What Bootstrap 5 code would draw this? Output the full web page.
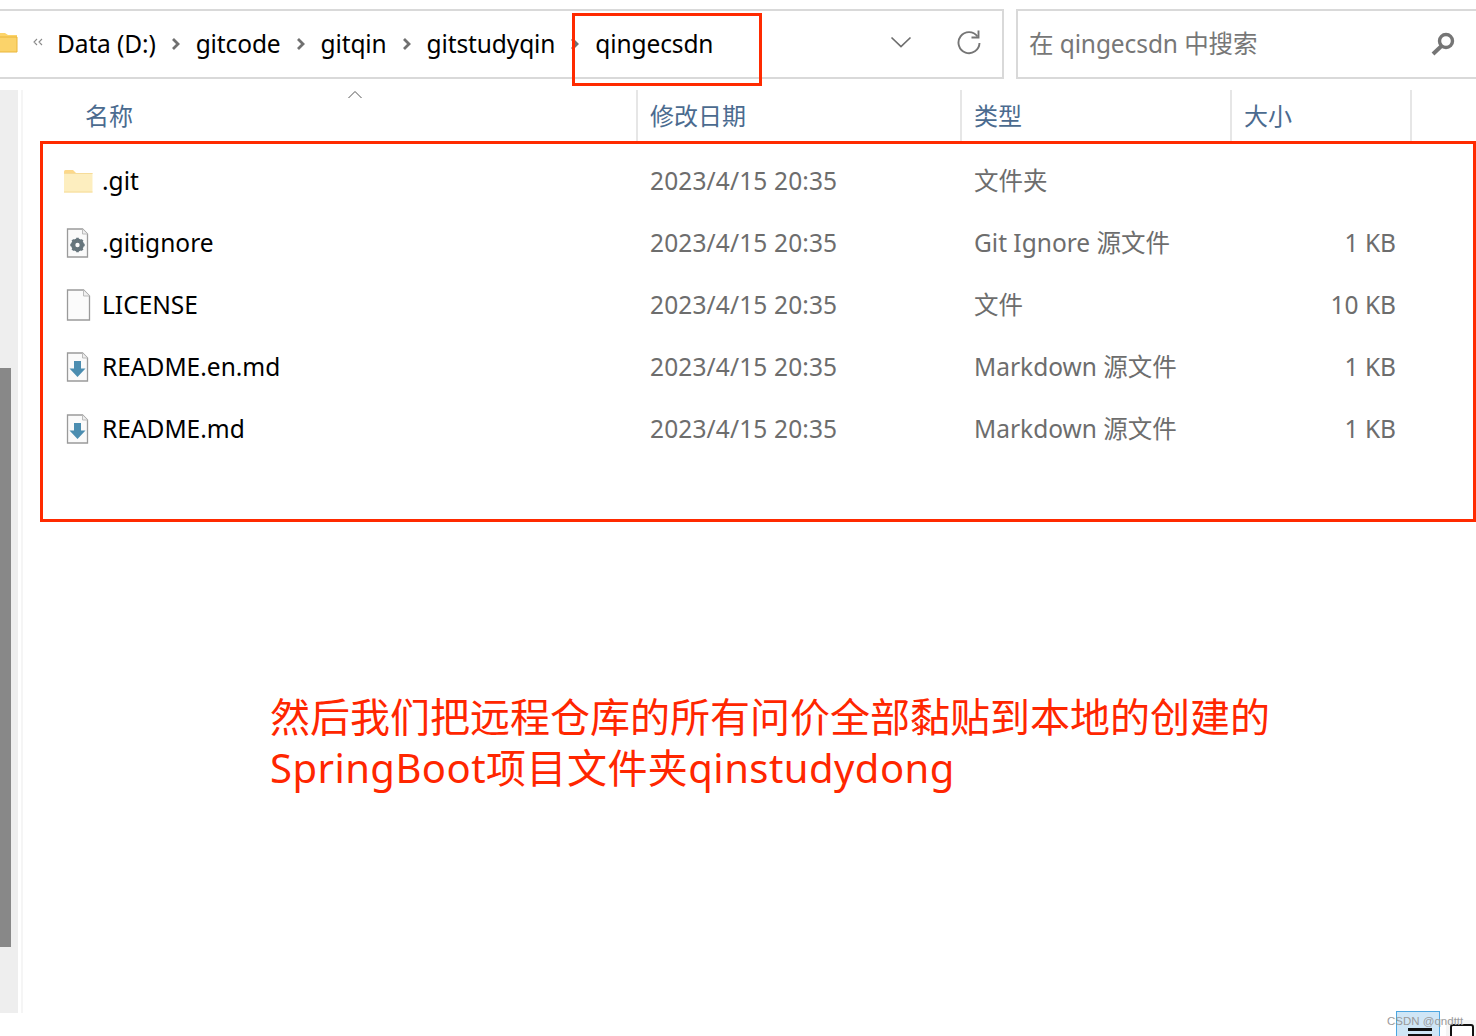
<!DOCTYPE html>
<html lang="zh-CN">
<head>
<meta charset="utf-8">
<title>qingecsdn</title>
<link rel="stylesheet" href="https://cdn.jsdelivr.net/npm/bootstrap@5.3.0/dist/css/bootstrap.min.css">
<style>
html,body{width:1476px;height:1036px;overflow:hidden;background:#fff}
body{position:relative;font-family:"Noto Sans","Noto Sans CJK SC",sans-serif;font-size:24.5px;color:#000;padding-top:9px}
.topbar{height:70px;gap:12px}
.addr{width:1004px;height:70px;border:solid #d9d9d9;border-width:2px 2px 2px 0;flex:none}
.srch{flex:1;height:70px;border:solid #d9d9d9;border-width:2px 0 2px 2px;padding-left:11px;padding-right:20px;color:#777;letter-spacing:-.1px}
.crumb{white-space:nowrap;line-height:1;margin-top:0;letter-spacing:-.12px}
.gap-chev{flex:none}
.explorer{margin-top:11px;height:923px}
.rail{width:24px;flex:none;background:linear-gradient(90deg,#eee 0,#eee 18px,#fff 18px,#fff 21px,#f5f5f5 21px,#f5f5f5 23px,#fff 23px)}
.thumb{width:11px;height:579px;background:#888;margin-top:278px}
.main-col{flex:1;min-width:0}
.cols{display:grid;grid-template-columns:614px 324px 270px 180px 64px}
.head{height:51px;color:#4b6b8f;font-size:24px}
.head>div{border-right:2px solid #e6e6e6;padding-left:12px;line-height:52px;position:relative}
.head>div:last-child{border-right:0}
.head>div:first-child{padding-left:61px}
.caret{position:absolute;left:323px;top:0}
.rows{padding-top:9px}
.frow{height:62px;color:#6d6d6d;align-items:center;font-size:24.5px}
.namecell{display:flex;align-items:center;color:#000;padding-left:40px}
.iconbox{width:38px;display:flex;flex:none}
.datecell,.typecell{padding-left:12px}
.datecell{letter-spacing:.13px}
.sizecell{text-align:right;padding-right:16px}
.note{padding:231px 0 0 246px;color:#ff2600;font-size:40px;line-height:51px;width:1270px}
.note-latin{letter-spacing:.45px}
.redbox{position:absolute;border:3px solid #ff2a00;pointer-events:none}
.box-a{left:572px;top:13px;width:190px;height:73px}
.box-b{left:40px;top:141px;width:1436px;height:381px}
.credit{position:absolute;left:1387px;top:1014px;font:11.500px/14px "Liberation Sans",sans-serif;color:#9a9a9a;z-index:3}
.mini-a{position:absolute;left:1396px;top:1011px;width:44px;height:30px;background:#cfe6f6;border:1px solid #4da6e0}
.mini-a i{position:absolute;left:11px;width:24px;height:3px;background:#111}
.mini-back{position:absolute;left:1446px;top:1020px;width:30px;height:16px;background:#f5f5f5}
.mini-b{position:absolute;left:1450px;top:1024px;width:24px;height:20px;border:2px solid #111;border-radius:3px;background:#fff}
</style>
</head>
<body>
<div class="topbar d-flex">
  <div class="addr d-flex align-items-center position-relative">
    <svg class="gap-chev" width="19" height="22" viewBox="0 0 19 22" style="margin-left:-1px;margin-top:-4px"><path d="M0 2h6l3 2h9v17H0z" fill="#fcd46a"/><path d="M0 6h18v15H0z" fill="#fbd36a" stroke="#eab63b" stroke-width="1"/></svg>
    <svg class="gap-chev" width="10" height="8" viewBox="0 0 10 8" style="margin-left:15px;margin-top:-4px"><path d="M4 1 1 4l3 3M9 1 6 4l3 3" fill="none" stroke="#8a8a8a" stroke-width="1.100"/></svg>
    <span class="crumb" style="margin-left:14px">Data (D:)</span>
    <svg class="gap-chev" width="10" height="14" viewBox="0 0 10 14" style="margin-left:15px"><path d="m2 2 5 5-5 5" fill="none" stroke="#707070" stroke-width="2.800"/></svg>
    <span class="crumb" style="margin-left:15px">gitcode</span>
    <svg class="gap-chev" width="10" height="14" viewBox="0 0 10 14" style="margin-left:15px"><path d="m2 2 5 5-5 5" fill="none" stroke="#707070" stroke-width="2.800"/></svg>
    <span class="crumb" style="margin-left:15px">gitqin</span>
    <svg class="gap-chev" width="10" height="14" viewBox="0 0 10 14" style="margin-left:15px"><path d="m2 2 5 5-5 5" fill="none" stroke="#707070" stroke-width="2.800"/></svg>
    <span class="crumb" style="margin-left:15px">gitstudyqin</span>
    <svg class="gap-chev" width="10" height="14" viewBox="0 0 10 14" style="margin-left:15px"><path d="m2 2 5 5-5 5" fill="none" stroke="#707070" stroke-width="2.800"/></svg>
    <span class="crumb" style="margin-left:15px">qingecsdn</span>
    <svg class="gap-chev ms-auto" width="22" height="12" viewBox="0 0 22 12" style="margin-right:44px;margin-top:-4px"><path d="m1.500 1.500 9.500 9 9.500-9" fill="none" stroke="#6e6e6e" stroke-width="1.700"/></svg>
    <svg class="gap-chev" width="26" height="26" viewBox="0 0 26 26" style="margin-right:20px;margin-top:-4px"><path d="M21.500 7.500A10.500 10.500 0 1 0 23.500 14" fill="none" stroke="#757575" stroke-width="1.900"/><path d="M22.500 1.500v7h-7" fill="none" stroke="#757575" stroke-width="1.900"/></svg>
  </div>
  <div class="srch d-flex align-items-center justify-content-between">
    <span>在 qingecsdn 中搜索</span>
    <svg width="26" height="26" viewBox="0 0 26 26"><circle cx="16" cy="10" r="6.500" fill="none" stroke="#757575" stroke-width="3.400"/><path d="M11.500 15 3 23" stroke="#757575" stroke-width="4"/></svg>
  </div>
</div>

<div class="explorer d-flex">
  <div class="rail"><div class="thumb"></div></div>
  <div class="main-col">
    <div class="cols head">
      <div>名称<svg class="caret" width="16" height="9" viewBox="0 0 16 9"><path d="m1.500 8 6.500-6.500L14.500 8" fill="none" stroke="#555" stroke-width="1"/></svg></div>
      <div>修改日期</div>
      <div>类型</div>
      <div>大小</div>
      <div></div>
    </div>
    <div class="rows">
      <div class="cols frow">
        <div class="namecell"><span class="iconbox"><svg width="29" height="23" viewBox="0 0 29 23"><path d="M0 1.500Q0 0 1.500 0H9l3 3H0z" fill="#fcd88a"/><path d="M0 3h28.500v19.500H0z" fill="#fdeebf"/><path d="M0 3h28.500v1H0zM0 21.500h28.500v1H0z" fill="#f6dc9a"/></svg></span><span>.git</span></div>
        <div class="datecell">2023/4/15 20:35</div><div class="typecell">文件夹</div><div class="sizecell"></div><div></div>
      </div>
      <div class="cols frow">
        <div class="namecell"><span class="iconbox"><svg width="29" height="30" viewBox="0 0 29 30"><path d="M3.500 1h15l5 5v23h-20z" fill="#fafafa" stroke="#9a9a9a" stroke-width="1.300"/><path d="M18.500 1v5h5" fill="#eee" stroke="#bbb"/><circle cx="13.500" cy="17" r="4.700" fill="none" stroke="#66757c" stroke-width="3.600"/><path d="M13.500 9.800v14.400M6.300 17h14.400M8.400 11.900l10.200 10.200M18.600 11.900 8.400 22.100" stroke="#66757c" stroke-width="2.600"/><circle cx="13.500" cy="17" r="2.200" fill="#fafafa"/></svg></span><span>.gitignore</span></div>
        <div class="datecell">2023/4/15 20:35</div><div class="typecell">Git Ignore 源文件</div><div class="sizecell">1 KB</div><div></div>
      </div>
      <div class="cols frow">
        <div class="namecell"><span class="iconbox"><svg width="29" height="32" viewBox="0 0 29 32"><path d="M3.500 1h16l6 6v24h-22z" fill="#fbfbfb" stroke="#9a9a9a" stroke-width="1.300"/><path d="M19.500 1v6h6" fill="#f0f0f0" stroke="#bbb"/></svg></span><span>LICENSE</span></div>
        <div class="datecell">2023/4/15 20:35</div><div class="typecell">文件</div><div class="sizecell">10 KB</div><div></div>
      </div>
      <div class="cols frow">
        <div class="namecell"><span class="iconbox"><svg width="29" height="30" viewBox="0 0 29 30"><path d="M3.500 1h15l5 5v23h-20z" fill="#fafafa" stroke="#9a9a9a" stroke-width="1.300"/><path d="M18.500 1v5h5" fill="#eee" stroke="#bbb"/><path d="M10 9h7v7.500h4.500l-8 8.500-8-8.500H10z" fill="#4b8db0"/></svg></span><span>README.en.md</span></div>
        <div class="datecell">2023/4/15 20:35</div><div class="typecell">Markdown 源文件</div><div class="sizecell">1 KB</div><div></div>
      </div>
      <div class="cols frow">
        <div class="namecell"><span class="iconbox"><svg width="29" height="30" viewBox="0 0 29 30"><path d="M3.500 1h15l5 5v23h-20z" fill="#fafafa" stroke="#9a9a9a" stroke-width="1.300"/><path d="M18.500 1v5h5" fill="#eee" stroke="#bbb"/><path d="M10 9h7v7.500h4.500l-8 8.500-8-8.500H10z" fill="#4b8db0"/></svg></span><span>README.md</span></div>
        <div class="datecell">2023/4/15 20:35</div><div class="typecell">Markdown 源文件</div><div class="sizecell">1 KB</div><div></div>
      </div>
    </div>
    <div class="note">然后我们把远程仓库的所有问价全部黏贴到本地的创建的<br><span class="note-latin">SpringBoot项目文件夹qinstudydong</span></div>
  </div>
</div>

<div class="redbox box-a"></div>
<div class="redbox box-b"></div>
<div class="mini-back"></div>
<div class="mini-a"><i style="top:16px"></i><i style="top:22px"></i></div>
<div class="mini-b"></div>
<div class="credit">CSDN @qndttt</div>
<script src="https://cdn.jsdelivr.net/npm/bootstrap@5.3.0/dist/js/bootstrap.bundle.min.js"></script>
</body>
</html>
